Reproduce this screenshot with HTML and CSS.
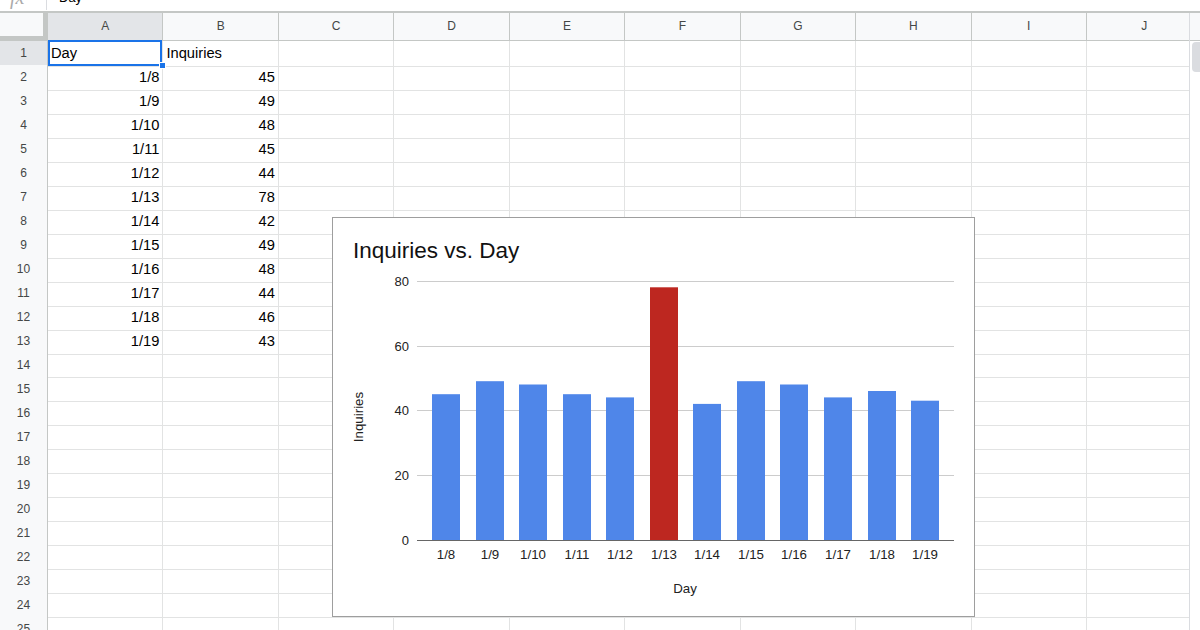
FILE: index.html
```html
<!DOCTYPE html>
<html lang="en">
  <head>
    <meta charset="UTF-8" />
    <meta name="viewport" content="width=device-width, initial-scale=1.0" />
    <title>Inquiries vs. Day</title>
    <link rel="stylesheet" href="styles.css">
  </head>
  <body>
    <div class="formula">
      <div class="fx">fx</div>
      <div class="formula-text">Day</div>
    </div>
    <div class="sheet">
      <div class="grid">
        <div class="row head">
          <div class="corner"></div>
          <div class="col sel">A</div><div class="col">B</div><div class="col">C</div><div class="col">D</div><div class="col">E</div>
          <div class="col">F</div><div class="col">G</div><div class="col">H</div><div class="col">I</div><div class="col">J</div>
        </div>
        <div class="row">
          <div class="rh sel">1</div>
          <div class="cell active">Day</div><div class="cell">Inquiries</div>
          <div class="cell"></div><div class="cell"></div><div class="cell"></div><div class="cell"></div><div class="cell"></div><div class="cell"></div><div class="cell"></div><div class="cell"></div>
        </div>
        <div class="row">
          <div class="rh">2</div>
          <div class="cell num">1/8</div><div class="cell num">45</div>
          <div class="cell"></div><div class="cell"></div><div class="cell"></div><div class="cell"></div><div class="cell"></div><div class="cell"></div><div class="cell"></div><div class="cell"></div>
        </div>
        <div class="row">
          <div class="rh">3</div>
          <div class="cell num">1/9</div><div class="cell num">49</div>
          <div class="cell"></div><div class="cell"></div><div class="cell"></div><div class="cell"></div><div class="cell"></div><div class="cell"></div><div class="cell"></div><div class="cell"></div>
        </div>
        <div class="row">
          <div class="rh">4</div>
          <div class="cell num">1/10</div><div class="cell num">48</div>
          <div class="cell"></div><div class="cell"></div><div class="cell"></div><div class="cell"></div><div class="cell"></div><div class="cell"></div><div class="cell"></div><div class="cell"></div>
        </div>
        <div class="row">
          <div class="rh">5</div>
          <div class="cell num">1/11</div><div class="cell num">45</div>
          <div class="cell"></div><div class="cell"></div><div class="cell"></div><div class="cell"></div><div class="cell"></div><div class="cell"></div><div class="cell"></div><div class="cell"></div>
        </div>
        <div class="row">
          <div class="rh">6</div>
          <div class="cell num">1/12</div><div class="cell num">44</div>
          <div class="cell"></div><div class="cell"></div><div class="cell"></div><div class="cell"></div><div class="cell"></div><div class="cell"></div><div class="cell"></div><div class="cell"></div>
        </div>
        <div class="row">
          <div class="rh">7</div>
          <div class="cell num">1/13</div><div class="cell num">78</div>
          <div class="cell"></div><div class="cell"></div><div class="cell"></div><div class="cell"></div><div class="cell"></div><div class="cell"></div><div class="cell"></div><div class="cell"></div>
        </div>
        <div class="row">
          <div class="rh">8</div>
          <div class="cell num">1/14</div><div class="cell num">42</div>
          <div class="cell"></div><div class="cell"></div><div class="cell"></div><div class="cell"></div><div class="cell"></div><div class="cell"></div><div class="cell"></div><div class="cell"></div>
        </div>
        <div class="row">
          <div class="rh">9</div>
          <div class="cell num">1/15</div><div class="cell num">49</div>
          <div class="cell"></div><div class="cell"></div><div class="cell"></div><div class="cell"></div><div class="cell"></div><div class="cell"></div><div class="cell"></div><div class="cell"></div>
        </div>
        <div class="row">
          <div class="rh">10</div>
          <div class="cell num">1/16</div><div class="cell num">48</div>
          <div class="cell"></div><div class="cell"></div><div class="cell"></div><div class="cell"></div><div class="cell"></div><div class="cell"></div><div class="cell"></div><div class="cell"></div>
        </div>
        <div class="row">
          <div class="rh">11</div>
          <div class="cell num">1/17</div><div class="cell num">44</div>
          <div class="cell"></div><div class="cell"></div><div class="cell"></div><div class="cell"></div><div class="cell"></div><div class="cell"></div><div class="cell"></div><div class="cell"></div>
        </div>
        <div class="row">
          <div class="rh">12</div>
          <div class="cell num">1/18</div><div class="cell num">46</div>
          <div class="cell"></div><div class="cell"></div><div class="cell"></div><div class="cell"></div><div class="cell"></div><div class="cell"></div><div class="cell"></div><div class="cell"></div>
        </div>
        <div class="row">
          <div class="rh">13</div>
          <div class="cell num">1/19</div><div class="cell num">43</div>
          <div class="cell"></div><div class="cell"></div><div class="cell"></div><div class="cell"></div><div class="cell"></div><div class="cell"></div><div class="cell"></div><div class="cell"></div>
        </div>
        <div class="row">
          <div class="rh">14</div>
          <div class="cell"></div><div class="cell"></div><div class="cell"></div><div class="cell"></div><div class="cell"></div><div class="cell"></div><div class="cell"></div><div class="cell"></div><div class="cell"></div><div class="cell"></div>
        </div>
        <div class="row">
          <div class="rh">15</div>
          <div class="cell"></div><div class="cell"></div><div class="cell"></div><div class="cell"></div><div class="cell"></div><div class="cell"></div><div class="cell"></div><div class="cell"></div><div class="cell"></div><div class="cell"></div>
        </div>
        <div class="row">
          <div class="rh">16</div>
          <div class="cell"></div><div class="cell"></div><div class="cell"></div><div class="cell"></div><div class="cell"></div><div class="cell"></div><div class="cell"></div><div class="cell"></div><div class="cell"></div><div class="cell"></div>
        </div>
        <div class="row">
          <div class="rh">17</div>
          <div class="cell"></div><div class="cell"></div><div class="cell"></div><div class="cell"></div><div class="cell"></div><div class="cell"></div><div class="cell"></div><div class="cell"></div><div class="cell"></div><div class="cell"></div>
        </div>
        <div class="row">
          <div class="rh">18</div>
          <div class="cell"></div><div class="cell"></div><div class="cell"></div><div class="cell"></div><div class="cell"></div><div class="cell"></div><div class="cell"></div><div class="cell"></div><div class="cell"></div><div class="cell"></div>
        </div>
        <div class="row">
          <div class="rh">19</div>
          <div class="cell"></div><div class="cell"></div><div class="cell"></div><div class="cell"></div><div class="cell"></div><div class="cell"></div><div class="cell"></div><div class="cell"></div><div class="cell"></div><div class="cell"></div>
        </div>
        <div class="row">
          <div class="rh">20</div>
          <div class="cell"></div><div class="cell"></div><div class="cell"></div><div class="cell"></div><div class="cell"></div><div class="cell"></div><div class="cell"></div><div class="cell"></div><div class="cell"></div><div class="cell"></div>
        </div>
        <div class="row">
          <div class="rh">21</div>
          <div class="cell"></div><div class="cell"></div><div class="cell"></div><div class="cell"></div><div class="cell"></div><div class="cell"></div><div class="cell"></div><div class="cell"></div><div class="cell"></div><div class="cell"></div>
        </div>
        <div class="row">
          <div class="rh">22</div>
          <div class="cell"></div><div class="cell"></div><div class="cell"></div><div class="cell"></div><div class="cell"></div><div class="cell"></div><div class="cell"></div><div class="cell"></div><div class="cell"></div><div class="cell"></div>
        </div>
        <div class="row">
          <div class="rh">23</div>
          <div class="cell"></div><div class="cell"></div><div class="cell"></div><div class="cell"></div><div class="cell"></div><div class="cell"></div><div class="cell"></div><div class="cell"></div><div class="cell"></div><div class="cell"></div>
        </div>
        <div class="row">
          <div class="rh">24</div>
          <div class="cell"></div><div class="cell"></div><div class="cell"></div><div class="cell"></div><div class="cell"></div><div class="cell"></div><div class="cell"></div><div class="cell"></div><div class="cell"></div><div class="cell"></div>
        </div>
        <div class="row">
          <div class="rh">25</div>
          <div class="cell"></div><div class="cell"></div><div class="cell"></div><div class="cell"></div><div class="cell"></div><div class="cell"></div><div class="cell"></div><div class="cell"></div><div class="cell"></div><div class="cell"></div>
        </div>
      </div>
      <div class="scroll">
        <div class="scroll-head"></div>
        <div class="thumb"></div>
      </div>
    </div>

    <div class="chart">
      <svg width="641" height="398" viewBox="0 0 641 398">
        <text class="title" x="20" y="40">Inquiries vs. Day</text>

        <g class="grid-lines">
          <line x1="84" y1="63.5" x2="621" y2="63.5"></line>
          <line x1="84" y1="128.5" x2="621" y2="128.5"></line>
          <line x1="84" y1="192.5" x2="621" y2="192.5"></line>
          <line x1="84" y1="257.5" x2="621" y2="257.5"></line>
        </g>

        <g class="y-labels">
          <text x="76" y="68">80</text>
          <text x="76" y="133">60</text>
          <text x="76" y="197">40</text>
          <text x="76" y="262">20</text>
          <text x="76" y="327">0</text>
        </g>

        <g class="bars">
          <rect x="99" y="176.2" width="28" height="145.8"></rect>
          <rect x="143" y="163.2" width="28" height="158.8"></rect>
          <rect x="186" y="166.5" width="28" height="155.5"></rect>
          <rect x="230" y="176.2" width="28" height="145.8"></rect>
          <rect x="273" y="179.4" width="28" height="142.6"></rect>
          <rect class="peak" x="317" y="69.3" width="28" height="252.7"></rect>
          <rect x="360" y="185.9" width="28" height="136.1"></rect>
          <rect x="404" y="163.2" width="28" height="158.8"></rect>
          <rect x="447" y="166.5" width="28" height="155.5"></rect>
          <rect x="491" y="179.4" width="28" height="142.6"></rect>
          <rect x="535" y="173" width="28" height="149"></rect>
          <rect x="578" y="182.7" width="28" height="139.3"></rect>
        </g>

        <line class="axis" x1="84" y1="322.5" x2="621" y2="322.5"></line>

        <g class="x-labels">
          <text x="113" y="341">1/8</text>
          <text x="157" y="341">1/9</text>
          <text x="200" y="341">1/10</text>
          <text x="244" y="341">1/11</text>
          <text x="287" y="341">1/12</text>
          <text x="331" y="341">1/13</text>
          <text x="374" y="341">1/14</text>
          <text x="418" y="341">1/15</text>
          <text x="461" y="341">1/16</text>
          <text x="505" y="341">1/17</text>
          <text x="549" y="341">1/18</text>
          <text x="592" y="341">1/19</text>
        </g>

        <text class="axis-title" x="352" y="375">Day</text>
        <text class="axis-title" transform="translate(30 199) rotate(-90)">Inquiries</text>
      </svg>
    </div>
  </body>
</html>
```

FILE: styles.css
```css
body {
  margin: 0;
  padding: 0;
  height: 630px;
  overflow: hidden;
  background-color: white;
  font-family: "Liberation Sans", Arial, sans-serif;
  color: black;
}
.formula {
  display: flex;
  height: 11px;
  overflow: hidden;
  border-bottom: 2px solid #c4c7c5;
}
.fx {
  width: 47px;
  box-sizing: border-box;
  padding-left: 10px;
  margin-top: -10px;
  height: 20px;
  line-height: 14px;
  font-family: "Liberation Serif", serif;
  font-style: italic;
  font-size: 20px;
  color: #aaaaaa;
  border-right: 1px solid #dadce0;
}
.formula-text {
  padding-left: 12px;
  margin-top: -9px;
  line-height: 14px;
  font-size: 13px;
}
.sheet {
  display: flex;
}
.grid {
  width: 1189px;
  overflow: hidden;
}
.row {
  display: grid;
  grid-template-columns: 48px repeat(10, 115.44px);
  height: 24px;
}
.row.head {
  height: 28px;
}
.corner,
.col,
.rh,
.cell {
  box-sizing: border-box;
  border-right: 1px solid #e2e3e3;
  border-bottom: 1px solid #e2e3e3;
}
.corner {
  background-color: #f8f9fa;
  border-right: 5px solid #c4c7c5;
  border-bottom: 5px solid #c4c7c5;
}
.col {
  background-color: #f8f9fa;
  border-right-color: #c4c7c5;
  border-bottom-color: #c4c7c5;
  text-align: center;
  line-height: 27px;
  font-size: 12px;
  color: #444746;
}
.rh {
  background-color: #f8f9fa;
  border-right-color: #c4c7c5;
  text-align: center;
  line-height: 24px;
  font-size: 12px;
  color: #444746;
}
.col.sel,
.rh.sel {
  background-color: #e3e5e8;
}
.cell {
  padding: 0 3px;
  line-height: 25px;
  font-size: 14.7px;
  white-space: nowrap;
}
.cell.num {
  text-align: right;
}
.cell.active {
  position: relative;
}
.cell.active::before {
  content: "";
  position: absolute;
  top: -1px;
  left: 0;
  right: 0;
  bottom: 0;
  border: 2px solid #1a73e8;
}
.cell.active::after {
  content: "";
  position: absolute;
  right: -4px;
  bottom: -3px;
  width: 5px;
  height: 5px;
  background-color: #1a73e8;
  border: 1px solid white;
}
.scroll {
  flex: 1;
  border-left: 1px solid #dadce0;
}
.scroll-head {
  height: 27px;
  background-color: #f8f9fa;
  border-bottom: 1px solid #c4c7c5;
}
.thumb {
  margin: 1px 0 0 2px;
  height: 30px;
  border-radius: 4px 0 0 4px;
  background-color: #dadce0;
}
.chart {
  position: absolute;
  left: 332px;
  top: 217px;
  width: 643px;
  height: 400px;
  box-sizing: border-box;
  border: 1px solid #9e9e9e;
  background-color: white;
}
.chart svg {
  display: block;
  font-family: "Liberation Sans", Arial, sans-serif;
}
.title {
  font-size: 22.5px;
  fill: #111;
}
.grid-lines line {
  stroke: #cccccc;
  stroke-width: 1;
}
.axis {
  stroke: #666666;
  stroke-width: 1;
}
.y-labels text {
  font-size: 13px;
  fill: #222;
  text-anchor: end;
}
.x-labels text {
  font-size: 13.3px;
  fill: #222;
  text-anchor: middle;
}
.bars rect {
  fill: #4f86e9;
}
.bars rect.peak {
  fill: #bd2720;
}
.axis-title {
  font-size: 13.3px;
  fill: #222;
  text-anchor: middle;
}
```
